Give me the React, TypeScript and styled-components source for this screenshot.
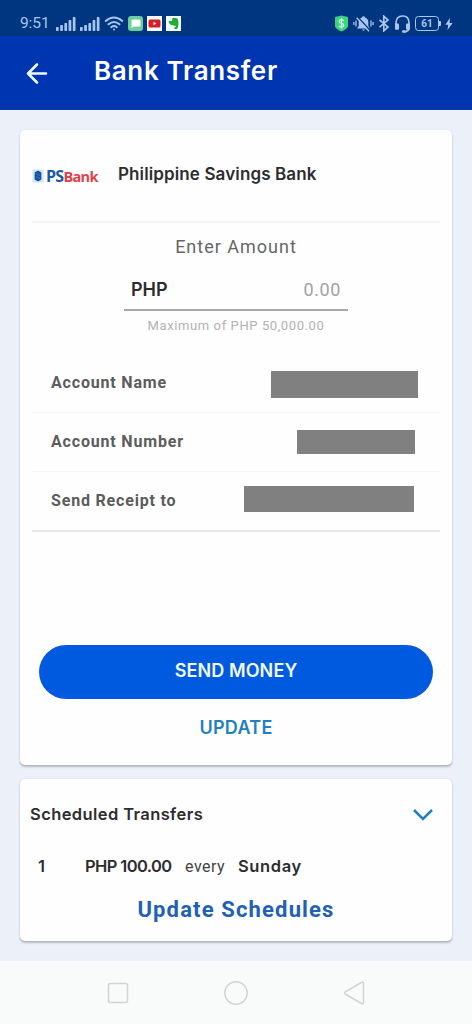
import React from "react";
import styled, { createGlobalStyle } from "styled-components";

const GlobalStyle = createGlobalStyle`
  * { box-sizing: border-box; }
  body { margin: 0; background: #ebf0f9; }
  button { border: 0; padding: 0; background: none; font: inherit; }
`;

const heading = `Inter, "Open Sans", sans-serif`;
const body = `Roboto, "Liberation Sans", sans-serif`;

const Screen = styled.div`
  width: 472px;
  height: 1024px;
  display: flex;
  flex-direction: column;
  background: #ebf0f9;
  font-family: ${heading};
  color: #2d2d30;
  overflow: hidden;
`;

const StatusBar = styled.div`
  height: 36px;
  flex: none;
  display: flex;
  justify-content: space-between;
  padding: 11px 19px 0 20px;
  background: #003580;
  color: #a9c6ee;
`;

const StatusGroup = styled.div<{ $gap: number }>`
  display: flex;
  align-items: center;
  height: 25px;
  gap: ${(p) => p.$gap}px;
  svg { display: block; flex: none; }
`;

const Clock = styled.span`
  font: 400 15.5px/25px ${body};
  letter-spacing: -0.1px;
  width: 31px;
  margin-right: 1px;
`;

const Header = styled.header`
  height: 74px;
  flex: none;
  display: flex;
  align-items: flex-start;
  padding: 20px 26px 0;
  gap: 46px;
  background: #0035b1;
  border-bottom: 1px solid #0a3fa0;
  color: #fff;
`;

const BackButton = styled.button`
  height: 34px;
  width: 22px;
  color: #eefaff;
  svg { display: block; }
`;

const Title = styled.h1`
  margin: 0;
  font-size: 26px;
  line-height: 30px;
  font-weight: 600;
  letter-spacing: 0.65px;
`;

const Content = styled.main`
  flex: 1;
  display: flex;
  flex-direction: column;
  gap: 14px;
  padding: 20px 20px 0;
`;

const Card = styled.section<{ $height: number }>`
  height: ${(p) => p.$height}px;
  display: flex;
  flex-direction: column;
  background: #fefefe;
  border-radius: 5px;
  box-shadow: 0 2px 2px rgba(70, 75, 90, 0.32), 0 0 2px rgba(70, 75, 90, 0.12);
`;

const BankRow = styled.div`
  height: 93px;
  margin: 0 12px;
  padding-bottom: 3px;
  display: flex;
  align-items: center;
  gap: 20px;
  border-bottom: 2px solid #f3f3f3;
`;

const Logo = styled.div`
  width: 66px;
  display: flex;
  align-items: center;
  gap: 2px;
  padding-top: 4px;
  font: 700 16px/18px "Open Sans", sans-serif;
  letter-spacing: -0.7px;
  color: #1a5a9e;
  white-space: nowrap;
  svg { flex: none; }
`;

const LogoAccent = styled.span`
  color: #e0404a;
  font-size: 14.5px;
`;

const BankName = styled.h2`
  margin: 0;
  font-size: 17px;
  line-height: 24px;
  font-weight: 600;
  letter-spacing: 0.12px;
  white-space: nowrap;
`;

const AmountBlock = styled.div`
  width: 224px;
  margin: 12px 0 0 104px;
  display: flex;
  flex-direction: column;
  text-align: center;
`;

const AmountLabel = styled.label`
  font: 400 18px/24px ${body};
  letter-spacing: 1px;
  color: #666;
`;

const AmountField = styled.div`
  display: flex;
  justify-content: space-between;
  align-items: center;
  height: 41px;
  margin-top: 11px;
  padding: 0 7px;
  border-bottom: 2px solid #a8a8a8;
`;

const Currency = styled.span`
  font: 600 18px/24px ${heading};
`;

const Placeholder = styled.span`
  font: 400 18px/24px ${body};
  letter-spacing: 0.6px;
  color: #a2a2a2;
`;

const Hint = styled.small`
  margin-top: 6px;
  font: 400 13px/18px ${body};
  letter-spacing: 0.6px;
  color: #b2b2b2;
`;

const Details = styled.div`
  margin: 18px 12px 0;
  border-bottom: 2px solid #e7e7e7;
`;

const DetailRow = styled.div<{ $end: number }>`
  height: 59px;
  display: flex;
  align-items: center;
  justify-content: space-between;
  padding: 0 ${(p) => p.$end}px 0 19px;
  & + & { border-top: 1px solid #f7f7f7; }
`;

const DetailLabel = styled.span`
  font: 700 16px/22px ${body};
  letter-spacing: 0.82px;
  color: #5c5c5c;
`;

const Redacted = styled.span<{ $w: number; $h: number; $top?: number; $bottom?: number }>`
  width: ${(p) => p.$w}px;
  height: ${(p) => p.$h}px;
  margin: ${(p) => p.$top ?? 0}px 0 ${(p) => p.$bottom ?? 0}px;
  background: #808080;
`;

const SendButton = styled.button`
  height: 54px;
  margin: 113px 19px 0;
  padding-bottom: 3px;
  border-radius: 27px;
  background: #005adf;
  color: #f0faff;
  font: 600 18px/24px ${heading};
  letter-spacing: 0.1px;
`;

const UpdateButton = styled.button`
  align-self: center;
  margin-top: 17px;
  font: 600 18px/24px ${heading};
  letter-spacing: 0.3px;
  color: #2080bf;
`;

const ScheduleHeader = styled.div`
  display: flex;
  justify-content: space-between;
  align-items: center;
  height: 24px;
  margin: 23px 18px 0 10px;
`;

const ScheduleTitle = styled.h3`
  margin: 0;
  font-size: 16.5px;
  line-height: 24px;
  font-weight: 600;
  letter-spacing: 0.4px;
`;

const ScheduleRow = styled.div`
  display: flex;
  height: 24px;
  margin: 28px 0 0 18px;
  font: 600 16.5px/24px ${heading};
  white-space: nowrap;
`;

const Index = styled.span`
  width: 47px;
`;

const Amount = styled.span`
  width: 100px;
  letter-spacing: -0.6px;
`;

const Frequency = styled.span`
  width: 53px;
  font: 400 16px/26px ${body};
  letter-spacing: 0.5px;
  color: #444;
`;

const Day = styled.span`
  letter-spacing: 0.6px;
`;

const SchedulesLink = styled.button`
  align-self: center;
  margin-top: 18px;
  font: 700 22px/28px ${body};
  letter-spacing: 1.15px;
  color: #2260b4;
`;

const NavBar = styled.nav`
  height: 63px;
  flex: none;
  display: flex;
  justify-content: center;
  align-items: center;
  gap: 94px;
  background: #f9fafa;
  svg { display: block; }
`;

const Signal = () => (
  <svg width="20" height="15" viewBox="0 0 20 15" fill="currentColor">
    <rect x="0" y="11" width="2.7" height="4" rx=".7" />
    <rect x="4.2" y="9" width="2.7" height="6" rx=".7" />
    <rect x="8.4" y="7" width="2.7" height="8" rx=".7" />
    <rect x="12.6" y="4" width="2.7" height="11" rx=".7" />
    <rect x="16.8" y="1" width="2.7" height="14" rx=".7" />
  </svg>
);

const Wifi = () => (
  <svg width="20" height="15" viewBox="0 0 19 15" fill="none" stroke="currentColor" strokeWidth="1.9" strokeLinecap="round">
    <path d="M1.2 5Q9.5-2 17.8 5M4 8.3q5.500-4.600 11 0M6.700 11.200q2.800-2.200 5.600 0" />
    <circle cx="9.500" cy="13.500" r="1" fill="currentColor" stroke="none" />
  </svg>
);

const MessageBadge = () => (
  <svg width="15" height="15" viewBox="0 0 15 15">
    <rect width="15" height="15" rx="3" fill="#6ccf9b" />
    <path d="M4.500 3.500h6.500q1.500 0 1.500 1.500v4q0 1.500-1.500 1.500H6l-2.500 1.500V5q0-1.500 1-1.500z" fill="#fff" />
  </svg>
);

const VideoBadge = () => (
  <svg width="15" height="15" viewBox="0 0 15 15">
    <rect width="15" height="15" fill="#f5fbfb" />
    <rect x="1.500" y="3.500" width="12" height="8" rx="1.500" fill="#d51f28" />
    <path d="M6.500 5.800v3.400l2.800-1.700z" fill="#fff" />
  </svg>
);

const NotesBadge = () => (
  <svg width="15" height="15" viewBox="0 0 15 15">
    <rect width="15" height="15" fill="#f5fbfb" />
    <path d="M6.500 2h3.300q2.500.3 2.700 4.200.2 4.300-1.300 6.800H8.500q-.8-1.300.7-2.200l.9-.1-.2-1q-2.200.6-2.600-.6Q3.500 9.500 2.700 6l.1-1h3.200z" fill="#23aa38" />
  </svg>
);

const Shield = () => (
  <svg width="15" height="17" viewBox="0 0 15 17">
    <path d="M7.500.5 14 2v9.500q-1.500 3-6.500 5-5-2-6.500-5V2z" fill="#3fd083" />
    <path d="M9.800 5.800Q8.800 4.600 7.300 4.700 5 5 5.200 6.700q.3 1.400 2.300 1.700 2.300.3 2.300 1.900-.2 1.700-2.300 1.800-1.800 0-2.700-1.300M7.500 3.200v10.400" stroke="#c4f7dc" strokeWidth="1.300" fill="none" />
  </svg>
);

const BellOff = () => (
  <svg width="21" height="17" viewBox="0 0 21 17">
    <path d="M10.500 1.200q1.300 0 1.500 1.200 3.300 1 3.300 4.600v4l1.700 2.500H4l1.700-2.500V7q0-3.600 3.300-4.600.2-1.200 1.500-1.200zM8.700 14.500h3.600q-1.800 2.300-3.600 0z" fill="currentColor" />
    <path d="M3 5.500v6M.9 7v3M18 5.500v6M20.100 7v3" stroke="currentColor" strokeWidth="1.300" />
    <path d="M4.700 1.900 17.200 15.400" stroke="#003580" strokeWidth="1.400" />
    <path d="M3.700 2.700 16 16.300" stroke="currentColor" strokeWidth="1.400" />
  </svg>
);

const Bluetooth = () => (
  <svg width="12" height="17" viewBox="0 0 12 17" fill="none" stroke="currentColor" strokeWidth="1.700">
    <path d="m1.500 4.800 8.500 7.200-4.200 3.800V1.200L10 5 1.500 12.200" />
  </svg>
);

const Headset = () => (
  <svg width="17" height="18" viewBox="0 0 17 18">
    <path d="M2 12V7.500Q2.300 1.200 8.500 1T15 7.500V13q0 3.500-5 3.800" fill="none" stroke="currentColor" strokeWidth="1.700" />
    <rect x="1" y="8.500" width="4" height="6.200" rx="1" fill="currentColor" />
    <rect x="12" y="8.500" width="4" height="6.200" rx="1" fill="currentColor" />
    <rect x="8" y="15.300" width="4" height="2.500" rx="1" fill="currentColor" />
  </svg>
);

const BatteryShell = styled.div`
  display: flex;
  align-items: center;
`;

const BatteryBody = styled.div`
  width: 24px;
  height: 15px;
  border: 1.500px solid currentColor;
  border-radius: 3.500px;
  font: 700 10px/13px ${body};
  text-align: center;
`;

const BatteryTip = styled.div`
  width: 2px;
  height: 5px;
  background: currentColor;
  border-radius: 0 1px 1px 0;
`;

const Bolt = () => (
  <svg width="8" height="12" viewBox="0 0 8 12" fill="currentColor">
    <path d="M5 0 .3 6.800h2.900L2.500 12l5.200-7H4.600z" />
  </svg>
);

const PsEmblem = () => (
  <svg width="12" height="14" viewBox="0 0 12 14">
    <rect x=".5" y=".5" width="11" height="13" fill="#cfe3f2" />
    <path d="m6 1.500 3.300 2v7L6 12.500l-3.300-2v-7z" fill="#15529a" />
    <path d="m4 4.500 4 2M4 7.500l4 2" stroke="#4d85bd" strokeWidth=".8" />
  </svg>
);

export default function App() {
  return (
    <>
      <GlobalStyle />
      <Screen>
        <StatusBar>
          <StatusGroup $gap={4}>
            <Clock>9:51</Clock>
            <Signal />
            <Signal />
            <Wifi />
            <MessageBadge />
            <VideoBadge />
            <NotesBadge />
          </StatusGroup>
          <StatusGroup $gap={4}>
            <Shield />
            <BellOff />
            <Bluetooth />
            <Headset />
            <BatteryShell>
              <BatteryBody>61</BatteryBody>
              <BatteryTip />
            </BatteryShell>
            <Bolt />
          </StatusGroup>
        </StatusBar>
        <Header>
          <BackButton aria-label="Back">
            <svg width="22" height="34" viewBox="0 0 22 34" fill="none" stroke="currentColor" strokeWidth="2.600" strokeLinecap="round" strokeLinejoin="round">
              <path d="M20 17.500H2M11 8.500l-9 9 9 9" />
            </svg>
          </BackButton>
          <Title>Bank Transfer</Title>
        </Header>
        <Content>
          <Card $height={635}>
            <BankRow>
              <Logo>
                <PsEmblem />
                <span>PS<LogoAccent>Bank</LogoAccent></span>
              </Logo>
              <BankName>Philippine Savings Bank</BankName>
            </BankRow>
            <AmountBlock>
              <AmountLabel>Enter Amount</AmountLabel>
              <AmountField>
                <Currency>PHP</Currency>
                <Placeholder>0.00</Placeholder>
              </AmountField>
              <Hint>Maximum of PHP 50,000.00</Hint>
            </AmountBlock>
            <Details>
              <DetailRow $end={22}>
                <DetailLabel>Account Name</DetailLabel>
                <Redacted $w={147} $h={27} $top={4} />
              </DetailRow>
              <DetailRow $end={25}>
                <DetailLabel>Account Number</DetailLabel>
                <Redacted $w={118} $h={24} />
              </DetailRow>
              <DetailRow $end={26}>
                <DetailLabel>Send Receipt to</DetailLabel>
                <Redacted $w={170} $h={26} $bottom={5} />
              </DetailRow>
            </Details>
            <SendButton>SEND MONEY</SendButton>
            <UpdateButton>UPDATE</UpdateButton>
          </Card>
          <Card $height={162}>
            <ScheduleHeader>
              <ScheduleTitle>Scheduled Transfers</ScheduleTitle>
              <svg width="22" height="14" viewBox="0 0 22 14" fill="none" stroke="#2080c0" strokeWidth="2.500">
                <path d="m2 3 9 9 9-9" />
              </svg>
            </ScheduleHeader>
            <ScheduleRow>
              <Index>1</Index>
              <Amount>PHP 100.00</Amount>
              <Frequency>every</Frequency>
              <Day>Sunday</Day>
            </ScheduleRow>
            <SchedulesLink>Update Schedules</SchedulesLink>
          </Card>
        </Content>
        <NavBar>
          <svg width="24" height="24" viewBox="0 0 24 24" fill="none" stroke="#d3d3d3" strokeWidth="1.500">
            <rect x="2.500" y="2.500" width="19" height="19" rx="2" />
          </svg>
          <svg width="24" height="24" viewBox="0 0 24 24" fill="none" stroke="#d3d3d3" strokeWidth="1.500">
            <circle cx="12" cy="12" r="11.200" />
          </svg>
          <svg width="24" height="24" viewBox="0 0 24 24" fill="none" stroke="#d3d3d3" strokeWidth="1.500" strokeLinejoin="round">
            <path d="M21.500 2.500v19q0 2-2 1L3 13q-1-1 0-2l16.500-9.500q2-1 2 1z" />
          </svg>
        </NavBar>
      </Screen>
    </>
  );
}
